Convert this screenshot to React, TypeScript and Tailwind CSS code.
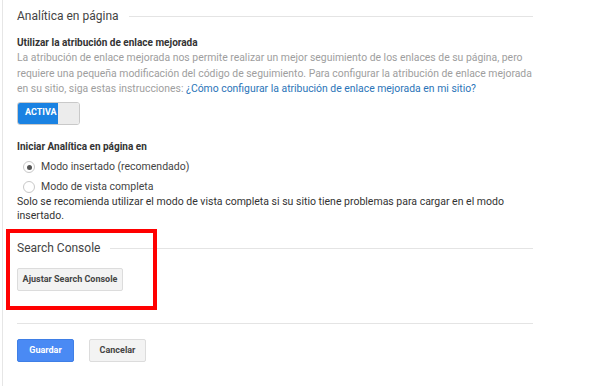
import React from "react";

function Radio({ checked, label }: { checked?: boolean; label: string }) {
  return (
    <div className="flex items-center h-[16px]">
      <span className="ml-[6px] w-[12px] h-[12px] rounded-full border border-[#c8c8c8] bg-white flex items-center justify-center">
        {checked && <span className="w-[5px] h-[5px] rounded-full bg-[#555]" />}
      </span>
      <span className="ml-[6px] text-[10.5px] text-[#444]">{label}</span>
    </div>
  );
}

export default function App() {
  return (
    <div className="relative w-[600px] h-[386px] bg-white overflow-hidden" style={{ fontFamily: "Roboto, 'Liberation Sans', sans-serif" }}>
      <div className="ml-[2px] h-full w-[531px] border-l border-[#e6e6e6] pl-[14px]">
        <div className="pt-[8px] flex items-center">
          <span className="text-[12px] leading-[16px] text-[#444]">Analítica en página</span>
          <span className="ml-[10px] flex-1 h-[1px] bg-[#e4e4e4]" />
        </div>
        <div className="mt-[12px] text-[10px] leading-[14px] font-bold text-[#333]">Utilizar la atribución de enlace mejorada</div>
        <p className="text-[10.4px] leading-[15.5px] text-[#9e9e9e]">
          La atribución de enlace mejorada nos permite realizar un mejor seguimiento de los enlaces de su página, pero requiere una pequeña modificación del código de seguimiento. Para configurar la atribución de enlace mejorada en su sitio, siga estas instrucciones:{" "}
          <span className="text-[#2a74b8]">¿Cómo configurar la atribución de enlace mejorada en mi sitio?</span>
        </p>
        <div className="mt-[5px] flex w-[63px] h-[23px] rounded-[3px] overflow-hidden border border-[#c9c9c9]">
          <div className="w-[40px] bg-[#1a82e2] flex items-center pl-[7px] text-[9px] font-bold text-white">ACTIVA</div>
          <div className="flex-1 bg-[#ececec]" />
        </div>
        <div className="mt-[15.5px] text-[10px] leading-[14px] font-bold text-[#333]">Iniciar Analítica en página en</div>
        <div className="mt-[5px] flex flex-col gap-[4px]">
          <Radio checked label="Modo insertado (recomendado)" />
          <Radio label="Modo de vista completa" />
        </div>
        <p className="text-[10.5px] leading-[14px] text-[#333]">
          Solo se recomienda utilizar el modo de vista completa si su sitio tiene problemas para cargar en el modo insertado.
        </p>
        <div className="mt-[17px] flex items-center">
          <span className="text-[12px] leading-[16px] text-[#444]">Search Console</span>
          <span className="ml-[10px] flex-1 h-[1px] bg-[#e4e4e4]" />
        </div>
        <button className="mt-[12px] h-[23px] w-[106px] whitespace-nowrap rounded-[2px] border border-[#dcdcdc] bg-[#f3f3f3] text-[9px] font-bold text-[#444] flex items-center justify-center">
          Ajustar Search Console
        </button>
        <div className="mt-[32px] h-[1px] bg-[#e4e4e4]" />
        <div className="mt-[15px] flex gap-[15px]">
          <button className="h-[23px] w-[57px] whitespace-nowrap rounded-[2px] border border-[#3f7fe6] bg-[#4a8af4] text-[9px] font-bold text-white flex items-center justify-center">
            Guardar
          </button>
          <button className="h-[23px] w-[57px] whitespace-nowrap rounded-[2px] border border-[#dcdcdc] bg-[#f3f3f3] text-[9px] font-bold text-[#444] flex items-center justify-center">
            Cancelar
          </button>
        </div>
      </div>
      <div className="absolute left-[6px] top-[229px] w-[151px] h-[81px] border-[4px] border-[#ff0000] pointer-events-none" />
    </div>
  );
}
